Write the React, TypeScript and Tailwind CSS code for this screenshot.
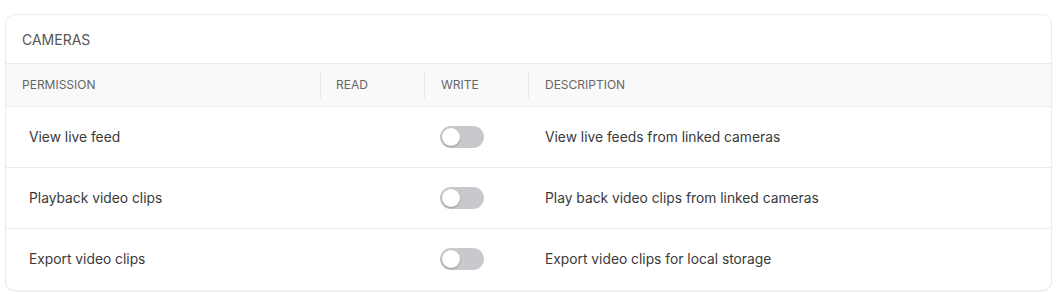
const rows = [
  { name: "View live feed", desc: "View live feeds from linked cameras" },
  { name: "Playback video clips", desc: "Play back video clips from linked cameras" },
  { name: "Export video clips", desc: "Export video clips for local storage" },
];

function Toggle() {
  return (
    <div className="relative h-[22px] w-[44px] rounded-full bg-[#c8c9cc]">
      <div className="absolute left-[2px] top-[2px] h-[18px] w-[18px] rounded-full bg-white shadow-[0_1px_2px_rgba(0,0,0,0.25)]" />
    </div>
  );
}

export default function App() {
  return (
    <div className="min-h-screen bg-white pl-[5px] pt-[14px] font-['Inter',sans-serif]">
      <div className="w-[1047px] overflow-hidden rounded-[10px] border border-[#ebebeb] bg-white shadow-[0_1px_1px_rgba(0,0,0,0.06)]">
        <div className="flex h-[48px] items-center px-[16px] pt-[1px] text-[14px] text-[#555]">
          CAMERAS
        </div>
        <div className="grid h-[44px] grid-cols-[314px_104px_104px_1fr] items-center border-y border-[#ebebeb] bg-[#f9f9f9] text-[12px] text-[#666]">
          <div className="pl-[16px]">PERMISSION</div>
          <div className="border-l border-[#e6e6e6] py-[4px] pl-[15px]">READ</div>
          <div className="border-l border-[#e6e6e6] py-[4px] pl-[16px]">WRITE</div>
          <div className="border-l border-[#e6e6e6] py-[4px] pl-[16px]">DESCRIPTION</div>
        </div>
        {rows.map((r, i) => (
          <div
            key={r.name}
            className={
              "grid h-[61px] grid-cols-[314px_104px_104px_1fr] items-center text-[13.8px] text-[#3a3a3a] " +
              (i < rows.length - 1 ? "border-b border-[#ebebeb]" : "")
            }
          >
            <div className="pl-[23px]">{r.name}</div>
            <div />
            <div className="pb-[1px] pl-[16px]">
              <Toggle />
            </div>
            <div className="pl-[17px]">{r.desc}</div>
          </div>
        ))}
      </div>
    </div>
  );
}
